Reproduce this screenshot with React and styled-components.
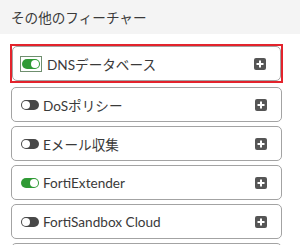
import React from "react";
import styled, { createGlobalStyle } from "styled-components";

const GlobalStyle = createGlobalStyle`
  html, body {
    margin: 0;
    padding: 0;
    background: #fff;
  }
  body {
    font-family: Lato, "Noto Sans CJK JP", sans-serif;
    color: #3a3a3a;
  }
`;

const Page = styled.div`
  width: 300px;
  height: 245px;
  overflow: hidden;
`;

const Header = styled.div`
  height: 34px;
  display: flex;
  align-items: center;
  padding-left: 11px;
  background: #f4f4f4;
  font-size: 13.6px;
`;

const List = styled.div`
  display: flex;
  flex-direction: column;
  gap: 4px;
  padding: 10px 18px 0 11px;
`;

const Selected = styled.div`
  border: 2px solid #e3232c;
  margin: 0 -1px;
`;

const Card = styled.div`
  box-sizing: border-box;
  height: 35px;
  display: flex;
  align-items: center;
  gap: 4px;
  padding: 0 14px 0 9px;
  border: 1px solid #a3a3a3;
  border-radius: 5px;
  background: #fff;
  font-size: 13.6px;
`;

const FocusRing = styled.span`
  flex: none;
  display: flex;
  padding: 2px 1px;
  margin: 0 1px 0 -2px;
  border: 1px solid #6f8f6f;
`;

const Toggle = styled.span`
  position: relative;
  flex: none;
  width: 18px;
  height: 10px;
  border-radius: 5px;
  background: ${(p) => (p.$on ? "#2f9a35" : "#484848")};

  &::after {
    content: "";
    position: absolute;
    top: 1px;
    left: ${(p) => (p.$on ? "9px" : "1px")};
    width: 8px;
    height: 8px;
    border-radius: 50%;
    background: #fff;
  }
`;

const Label = styled.span`
  flex: 1;
  white-space: nowrap;
  overflow: hidden;
`;

const PlusBox = styled.span`
  flex: none;
  width: 12px;
  height: 12px;
  border-radius: 2px;
  background: #555;
  display: flex;
  align-items: center;
  justify-content: center;
`;

const Plus = () => (
  <PlusBox>
    <svg width="8" height="8" viewBox="0 0 8 8">
      <path d="M4 0.5V7.5M0.5 4H7.5" stroke="#fff" strokeWidth="2" />
    </svg>
  </PlusBox>
);

const features = [
  { name: "DNSデータベース", on: true, selected: true },
  { name: "DoSポリシー", on: false },
  { name: "Eメール収集", on: false },
  { name: "FortiExtender", on: true },
  { name: "FortiSandbox Cloud", on: false },
  { name: "FortiVoice", on: false },
];

const Row = ({ item }) => (
  <Card>
    {item.selected ? (
      <FocusRing>
        <Toggle $on={item.on} />
      </FocusRing>
    ) : (
      <Toggle $on={item.on} />
    )}
    <Label>{item.name}</Label>
    <Plus />
  </Card>
);

export default function App() {
  return (
    <Page>
      <GlobalStyle />
      <Header>その他のフィーチャー</Header>
      <List>
        {features.map((item) =>
          item.selected ? (
            <Selected key={item.name}>
              <Row item={item} />
            </Selected>
          ) : (
            <Row key={item.name} item={item} />
          )
        )}
      </List>
    </Page>
  );
}
